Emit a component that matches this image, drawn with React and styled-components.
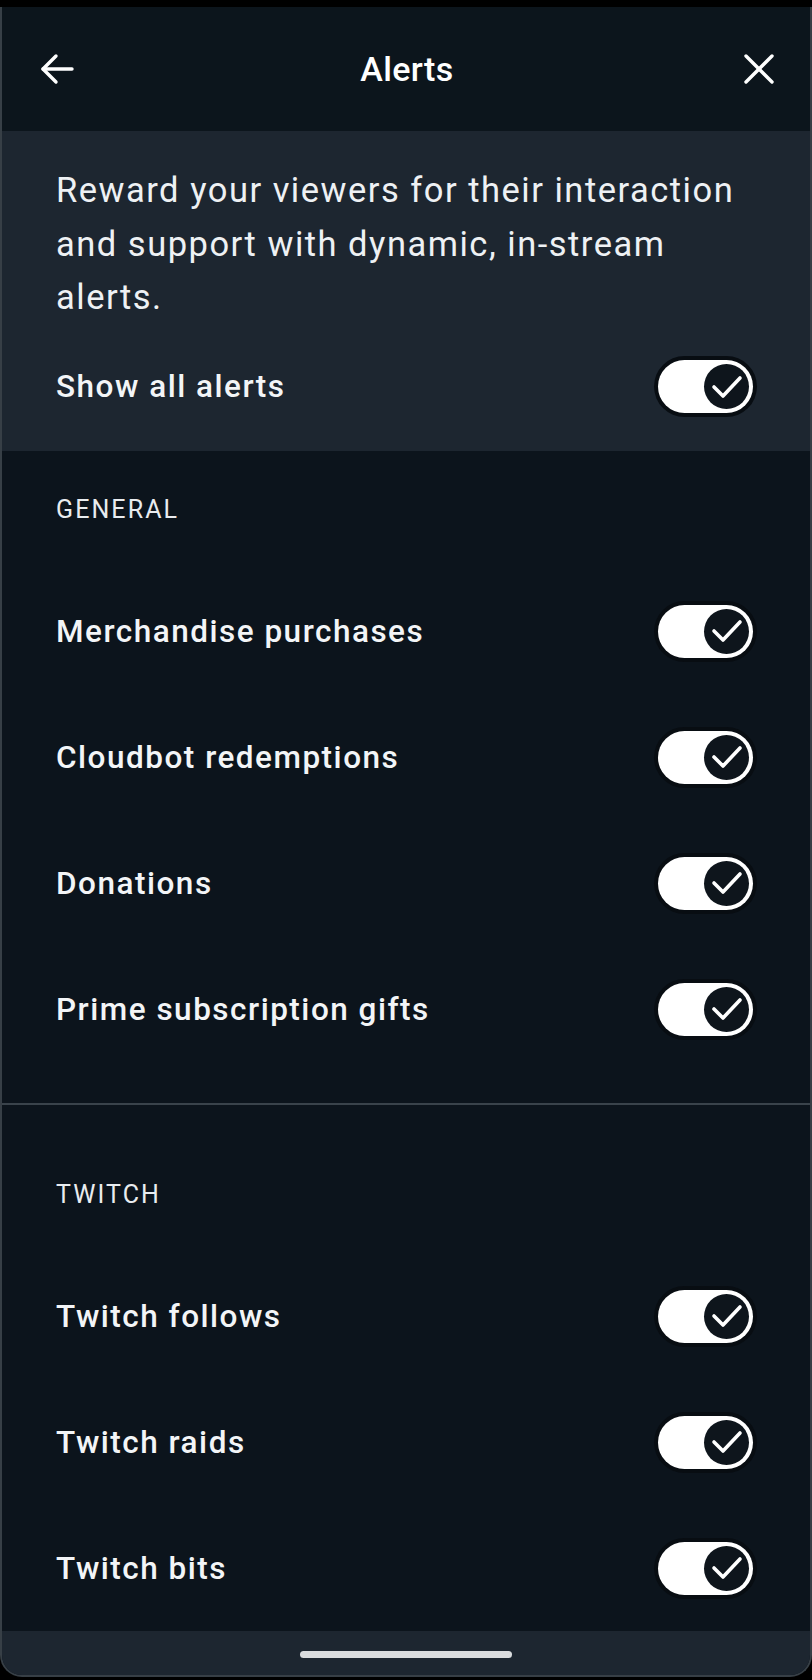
import React from "react";
import styled, { createGlobalStyle } from "styled-components";

const GlobalStyle = createGlobalStyle`
  html, body {
    margin: 0;
    padding: 0;
    background: #050708;
  }
  body {
    font-family: Roboto, "Noto Sans", "Liberation Sans", sans-serif;
    -webkit-font-smoothing: antialiased;
  }
  * { box-sizing: border-box; }
`;

const Device = styled.div`
  width: 812px;
  height: 1680px;
  padding-top: 7px;
  background: #000;
`;

const Screen = styled.div`
  height: 1670px;
  display: flex;
  flex-direction: column;
  border: 2px solid #373f46;
  border-top: none;
  border-radius: 0 0 22px 22px;
  overflow: hidden;
  background: #0c141c;
  color: #f1f3f5;
`;

const Header = styled.header`
  height: 124px;
  flex: none;
  display: grid;
  grid-template-columns: 1fr auto 1fr;
  align-items: center;
  padding: 0 36px 0 38px;
  background: #0c151c;
`;

const IconButton = styled.button`
  display: flex;
  align-items: center;
  justify-content: ${(p) => (p.$end ? "flex-end" : "flex-start")};
  justify-self: ${(p) => (p.$end ? "end" : "start")};
  padding: 0;
  border: none;
  background: none;
  color: #ffffff;
  cursor: pointer;
`;

const Title = styled.h1`
  margin: 0;
  font-size: 34px;
  font-weight: 500;
  letter-spacing: 0.4px;
  line-height: 1;
  color: #ffffff;
`;

const Intro = styled.section`
  flex: none;
  height: 320px;
  padding: 33px 57px 0 54px;
  background: #1d2630;
`;

const Description = styled.p`
  margin: 0 0 31px;
  font-size: 34.5px;
  font-weight: 400;
  letter-spacing: 1.5px;
  line-height: 53.5px;
  color: #eef1f4;
`;

const Row = styled.div`
  display: flex;
  align-items: center;
  justify-content: space-between;
  height: ${(p) => p.$height || 126}px;
`;

const RowLabel = styled.span`
  font-size: 31.5px;
  font-weight: 500;
  letter-spacing: 1.5px;
  color: #f3f5f7;
`;

const Section = styled.section`
  padding: ${(p) => p.$top}px 57px 0 54px;
`;

const SectionLabel = styled.h2`
  margin: 0 0 43px;
  font-size: 25px;
  font-weight: 400;
  letter-spacing: 2.1px;
  line-height: 30px;
  color: #e9ecef;
`;

const Divider = styled.hr`
  margin: 31px 0 0;
  border: none;
  height: 2px;
  background: #3a434b;
`;

const List = styled.div`
  flex: 1;
`;

const NavBar = styled.div`
  flex: none;
  height: 46px;
  display: flex;
  align-items: center;
  justify-content: center;
  background: #1d2630;
`;

const Handle = styled.div`
  width: 212px;
  height: 7px;
  border-radius: 4px;
  background: #dadcde;
`;

const Track = styled.span`
  position: relative;
  flex: none;
  width: 95px;
  height: 53px;
  border-radius: 27px;
  background: #ffffff;
  box-shadow: 0 0 0 4px #080d12;
`;

const Knob = styled.span`
  position: absolute;
  top: 4px;
  right: 4px;
  width: 45px;
  height: 45px;
  border-radius: 50%;
  background: #0e151c;
  display: flex;
  align-items: center;
  justify-content: center;
`;

function Toggle() {
  return (
    <Track role="switch" aria-checked="true">
      <Knob>
        <svg width="32" height="24" viewBox="0 0 32 24" fill="none">
          <polyline
            points="3,12 12,21 29,3"
            stroke="#ffffff"
            strokeWidth="3.6"
            strokeLinecap="round"
            strokeLinejoin="round"
          />
        </svg>
      </Knob>
    </Track>
  );
}

function BackIcon() {
  return (
    <svg width="34" height="32" viewBox="0 0 34 32" fill="none">
      <g stroke="#ffffff" strokeWidth="3.4" strokeLinecap="round" strokeLinejoin="round">
        <line x1="3" y1="16" x2="32" y2="16" />
        <polyline points="16,3 3,16 16,29" />
      </g>
    </svg>
  );
}

function CloseIcon() {
  return (
    <svg width="30" height="30" viewBox="0 0 30 30" fill="none">
      <g stroke="#ffffff" strokeWidth="3.4" strokeLinecap="round">
        <line x1="2" y1="2" x2="28" y2="28" />
        <line x1="28" y1="2" x2="2" y2="28" />
      </g>
    </svg>
  );
}

const general = [
  "Merchandise purchases",
  "Cloudbot redemptions",
  "Donations",
  "Prime subscription gifts",
];

const twitch = ["Twitch follows", "Twitch raids", "Twitch bits"];

export default function App() {
  return (
    <>
      <GlobalStyle />
      <Device>
        <Screen>
          <Header>
            <IconButton aria-label="Back">
              <BackIcon />
            </IconButton>
            <Title>Alerts</Title>
            <IconButton $end aria-label="Close">
              <CloseIcon />
            </IconButton>
          </Header>

          <Intro>
            <Description>
              Reward your viewers for their interaction and support with dynamic,
              in-stream alerts.
            </Description>
            <Row $height={62}>
              <RowLabel>Show all alerts</RowLabel>
              <Toggle />
            </Row>
          </Intro>

          <List>
            <Section $top={44}>
              <SectionLabel>GENERAL</SectionLabel>
              {general.map((name) => (
                <Row key={name}>
                  <RowLabel>{name}</RowLabel>
                  <Toggle />
                </Row>
              ))}
            </Section>
            <Divider />
            <Section $top={75}>
              <SectionLabel>TWITCH</SectionLabel>
              {twitch.map((name) => (
                <Row key={name}>
                  <RowLabel>{name}</RowLabel>
                  <Toggle />
                </Row>
              ))}
            </Section>
          </List>

          <NavBar>
            <Handle />
          </NavBar>
        </Screen>
      </Device>
    </>
  );
}
